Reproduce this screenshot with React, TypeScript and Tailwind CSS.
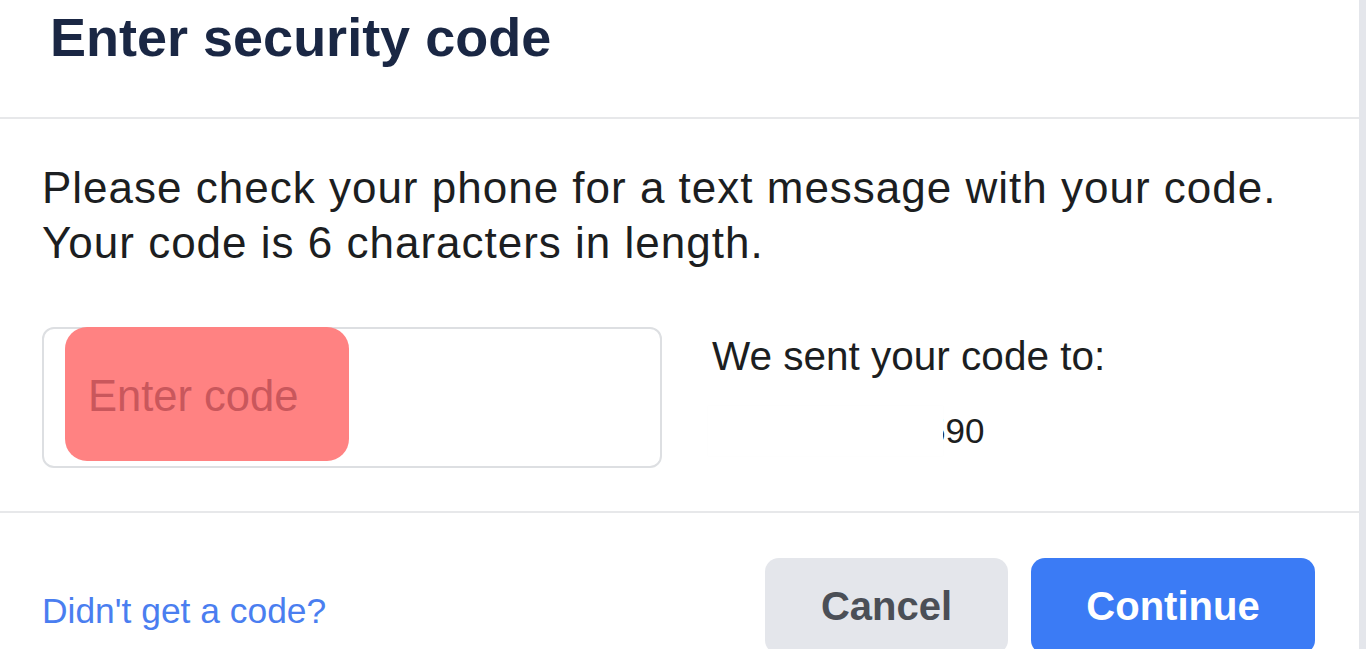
export default function App() {
    return (
        <div className="flex h-[649px] w-[1366px] overflow-hidden bg-white font-['Liberation_Sans',Arial,sans-serif]">
            <div className="flex min-w-0 flex-1 flex-col">
                {/* Header */}
                <div className="h-[119px] shrink-0 border-b-2 border-[#e7e8ea] pl-[50px] pt-[6px]">
                    <h1 className="text-[54px] font-bold leading-[62px] text-[#1a2744]">
                        Enter security code
                    </h1>
                </div>

                {/* Body */}
                <div className="h-[394px] shrink-0 border-b-2 border-[#e7e8ea] pl-[42px] pt-[41px]">
                    <p className="text-[44px] leading-[55px] tracking-[1px] text-[#1c1e21]">
                        Please check your phone for a text message with your code.
                        <br />
                        Your code is 6 characters in length.
                    </p>
                    <div className="mt-[57px] flex">
                        <div className="relative h-[141px] w-[620px] rounded-[12px] border-2 border-[#dddfe2] bg-white">
                            <div className="absolute left-[21px] top-[-2px] h-[134px] w-[284px] rounded-[22px] bg-[#ff8282]" />
                            <span className="absolute left-[44px] top-[41px] text-[43.5px] leading-[52px] text-[#c9575c]">
                                Enter code
                            </span>
                        </div>
                        <div className="ml-[50px] pt-[3px]">
                            <div className="text-[40.5px] leading-[52px] text-[#1c1e21]">
                                We sent your code to:
                            </div>
                            <div className="relative mt-[24px] h-[50px] w-[300px] pl-[214px] text-[35px] leading-[50px] text-[#1c1e21]">
                                590
                                <div className="absolute left-[-4px] top-0 h-[50px] w-[235px] bg-white shadow-[0_0_3px_rgba(0,0,0,0.02)]" />
                            </div>
                        </div>
                    </div>
                </div>

                {/* Footer */}
                <div className="flex items-start justify-between pl-[42px] pr-[44px] pt-[45px]">
                    <a className="mt-[33px] text-[35.4px] leading-[40px] text-[#4a7ef0]" href="#">
                        Didn&apos;t get a code?
                    </a>
                    <div className="flex gap-[23px]">
                        <button className="h-[96px] w-[243px] rounded-[14px] bg-[#e4e6eb] text-[40px] font-bold text-[#4b4f56]">
                            Cancel
                        </button>
                        <button className="h-[96px] w-[284px] rounded-[14px] bg-[#3b7bf5] text-[40px] font-bold text-white">
                            Continue
                        </button>
                    </div>
                </div>
            </div>
            <div className="w-[7px] shrink-0 bg-[#e4e6eb]" />
        </div>
    )
}
